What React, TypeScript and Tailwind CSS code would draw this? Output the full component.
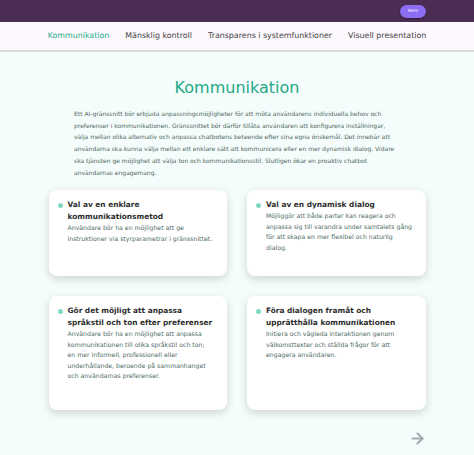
import { ArrowRight } from "lucide-react";

const navItems = [
  "Kommunikation",
  "Mänsklig kontroll",
  "Transparens i systemfunktioner",
  "Visuell presentation",
];

const cards = [
  {
    title: "Val av en enklare kommunikationsmetod",
    text: "Användare bör ha en möjlighet att ge instruktioner via styrparametrar i gränssnittet.",
  },
  {
    title: "Val av en dynamisk dialog",
    text: "Möjliggör att både parter kan reagera och anpassa sig till varandra under samtalets gång för att skapa en mer flexibel och naturlig dialog.",
  },
  {
    title: "Gör det möjligt att anpassa språkstil och ton efter preferenser",
    text: "Användare bör ha en möjlighet att anpassa kommunikationen till olika språkstil och ton; en mer informell, professionell eller underhållande, beroende på sammanhanget och användarnas preferenser.",
  },
  {
    title: "Föra dialogen framåt och upprätthålla kommunikationen",
    text: "Initiera och vägleda interaktionen genom välkomsttexter och ställda frågor för att engagera användaren.",
  },
];

function Card({ title, text }: { title: string; text: string }) {
  return (
    <div className="min-h-[86px] rounded-[8px] bg-white pl-[19px] pr-[13px] pt-[9px] pb-[16px] shadow-[0_3px_8px_rgba(0,0,0,0.16)]">
      <div className="relative text-[7.4px] font-bold leading-[12px] text-[#2d2d2d]">
        <span className="absolute left-[-10px] top-[3.5px] h-[5px] w-[5px] rounded-full bg-[#80d9c5]" />
        {title}
      </div>
      <p className="text-[6.2px] leading-[10.5px] text-[#4d6b64]">{text}</p>
    </div>
  );
}

export default function App() {
  return (
    <div className="min-h-screen bg-[#f4fdfb] font-['DejaVu_Sans',sans-serif]">
      <header className="flex h-[22px] items-center justify-end bg-[#4b2d54] pr-[48px]">
        <button className="h-[13px] w-[26px] rounded-full bg-[#8c6cf2] text-[4.5px] text-white shadow-[0_1px_2px_rgba(0,0,0,0.4)]">
          Hem
        </button>
      </header>
      <nav className="flex h-[30px] items-center justify-center gap-[16px] border-b-2 border-[#d8d8d8] bg-[#fdf7fe] text-[7.9px] text-[#444]">
        {navItems.map((item, i) => (
          <span key={item} className={i === 0 ? "text-[#2aae8c]" : ""}>
            {item}
          </span>
        ))}
      </nav>
      <main className="flex flex-col items-center">
        <h1 className="mt-[26px] text-[16px] leading-[20px] text-[#25a886]">
          Kommunikation
        </h1>
        <p className="mt-[10px] w-[326px] text-[6px] leading-[11.7px] text-[#4f6660]">
          Ett AI-gränssnitt bör erbjuda anpassningsmöjligheter för att möta
          användarens individuella behov och preferenser i kommunikationen.
          Gränssnittet bör därför tillåta användaren att konfigurera
          inställningar, välja mellan olika alternativ och anpassa chatbotens
          beteende efter sina egna önskemål. Det innebär att användarna ska
          kunna välja mellan ett enklare sätt att kommunicera eller en mer
          dynamisk dialog. Vidare ska tjänsten ge möjlighet att välja ton och
          kommunikationsstil. Slutligen ökar en proaktiv chatbot användarnas
          engagemang.
        </p>
        <div className="mt-[12px] grid w-[377px] grid-cols-2 grid-rows-[auto_minmax(114px,auto)] gap-[20px]">
          {cards.map((c) => (
            <Card key={c.title} {...c} />
          ))}
        </div>
        <div className="mt-[20px] flex w-[377px] justify-end">
          <ArrowRight size={17} strokeWidth={3} className="text-[#a4abb2]" />
        </div>
      </main>
    </div>
  );
}
